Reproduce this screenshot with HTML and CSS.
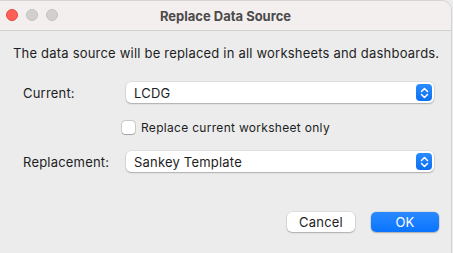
FILE: index.html
```html
<!DOCTYPE html>
<html>
  <head>
    <meta charset="utf-8" />
    <title>Replace Data Source</title>
    <link rel="stylesheet" href="styles.css">
  </head>
  <body>
    <div class="window">
      <div class="titlebar">
        <div class="lights">
          <span class="light close"></span>
          <span class="light"></span>
          <span class="light"></span>
        </div>
        <div class="title">Replace Data Source</div>
      </div>

      <div class="content">
        <p class="message">The data source will be replaced in all worksheets and dashboards.</p>

        <div class="row">
          <span class="row-label">Current:</span>
          <div class="select">
            <span class="select-text">LCDG</span>
            <span class="stepper">
              <svg width="9" height="12" viewBox="0 0 9 12">
                <path d="M1.5 4.5 L4.5 1.5 L7.5 4.5 M1.5 7.5 L4.5 10.5 L7.5 7.5" fill="none" stroke="#fff" stroke-width="1.5" stroke-linecap="round" stroke-linejoin="round"/>
              </svg>
            </span>
          </div>
        </div>

        <label class="check-row">
          <span class="checkbox"></span>
          <span class="check-label">Replace current worksheet only</span>
        </label>

        <div class="row row-second">
          <span class="row-label">Replacement:</span>
          <div class="select">
            <span class="select-text">Sankey Template</span>
            <span class="stepper">
              <svg width="9" height="12" viewBox="0 0 9 12">
                <path d="M1.5 4.5 L4.5 1.5 L7.5 4.5 M1.5 7.5 L4.5 10.5 L7.5 7.5" fill="none" stroke="#fff" stroke-width="1.5" stroke-linecap="round" stroke-linejoin="round"/>
              </svg>
            </span>
          </div>
        </div>

        <div class="buttons">
          <button class="btn">Cancel</button>
          <button class="btn primary">OK</button>
        </div>
      </div>
    </div>
  </body>
</html>
```

FILE: styles.css
```css
html,
body {
  margin: 0;
  padding: 0;
}

body {
  width: 453px;
  height: 253px;
  background: #ececec;
  font-family: Inter, "Liberation Sans", sans-serif;
  font-size: 13px;
  letter-spacing: 0.2px;
  color: #1e1e1e;
  overflow: hidden;
}

.window {
  width: 452px;
  height: 253px;
  box-sizing: border-box;
  border-top: 1px solid #d6d3d3;
  border-right: 1px solid #d4d4d4;
  border-top-right-radius: 10px;
  background: #ececec;
  overflow: hidden;
}

.titlebar {
  position: relative;
  height: 29px;
  background: #f4efef;
  border-bottom: 1px solid #d2d0d0;
  display: flex;
  align-items: center;
  justify-content: center;
}

.lights {
  position: absolute;
  left: 6px;
  top: 8px;
  display: flex;
  gap: 8px;
}

.light {
  width: 12px;
  height: 12px;
  border-radius: 50%;
  background: #d2cfcf;
  box-sizing: border-box;
  border: 1px solid #c5c1c1;
}

.light.close {
  background: #fe5f57;
  border-color: #e5473f;
}

.title {
  font-weight: 700;
  font-size: 13px;
  letter-spacing: 0;
  color: #4c4a4a;
}

.content {
  padding: 0 12px 0 13px;
}

.message {
  margin: 14px 0 0 0;
  line-height: 16px;
  color: #1e1e1e;
  white-space: nowrap;
}

.row {
  display: flex;
  align-items: center;
  margin-top: 21px;
}

.row-second {
  margin-top: 12px;
}

.row-label {
  width: 113px;
  padding-left: 10px;
  box-sizing: border-box;
  color: #1e1e1e;
}

.select {
  flex: 0 0 308px;
  height: 21px;
  box-sizing: border-box;
  display: flex;
  align-items: center;
  justify-content: space-between;
  background: #fff;
  border-radius: 5px;
  box-shadow: 0 0 0 0.5px rgba(0, 0, 0, 0.12), 0 1px 1.5px rgba(0, 0, 0, 0.22);
  padding: 0 2px 0 8px;
}

.stepper {
  width: 16px;
  height: 17px;
  border-radius: 4px;
  background: linear-gradient(#2b8cff, #0a6ff0);
  display: flex;
  align-items: center;
  justify-content: center;
}

.check-row {
  display: flex;
  align-items: center;
  gap: 6px;
  margin-left: 109px;
  height: 24px;
  margin-top: 12px;
}

.check-label {
  font-size: 12px;
  letter-spacing: 0.3px;
}

.checkbox {
  width: 13px;
  height: 13px;
  box-sizing: border-box;
  background: #fff;
  border-radius: 3px;
  box-shadow: 0 0 0 0.5px rgba(0, 0, 0, 0.25), 0 0.5px 1px rgba(0, 0, 0, 0.2);
}

.buttons {
  display: flex;
  justify-content: flex-end;
  gap: 16px;
  margin-top: 40px;
}

.btn {
  width: 68px;
  height: 20px;
  padding: 0;
  border: none;
  border-radius: 5px;
  background: #fff;
  font-family: inherit;
  font-size: 13px;
  letter-spacing: 0.2px;
  color: #1e1e1e;
  box-shadow: 0 0 0 0.5px rgba(0, 0, 0, 0.12), 0 1px 1.5px rgba(0, 0, 0, 0.22);
}

.btn.primary {
  background: linear-gradient(#2a8aff, #0a74ff);
  color: #fff;
}
```
